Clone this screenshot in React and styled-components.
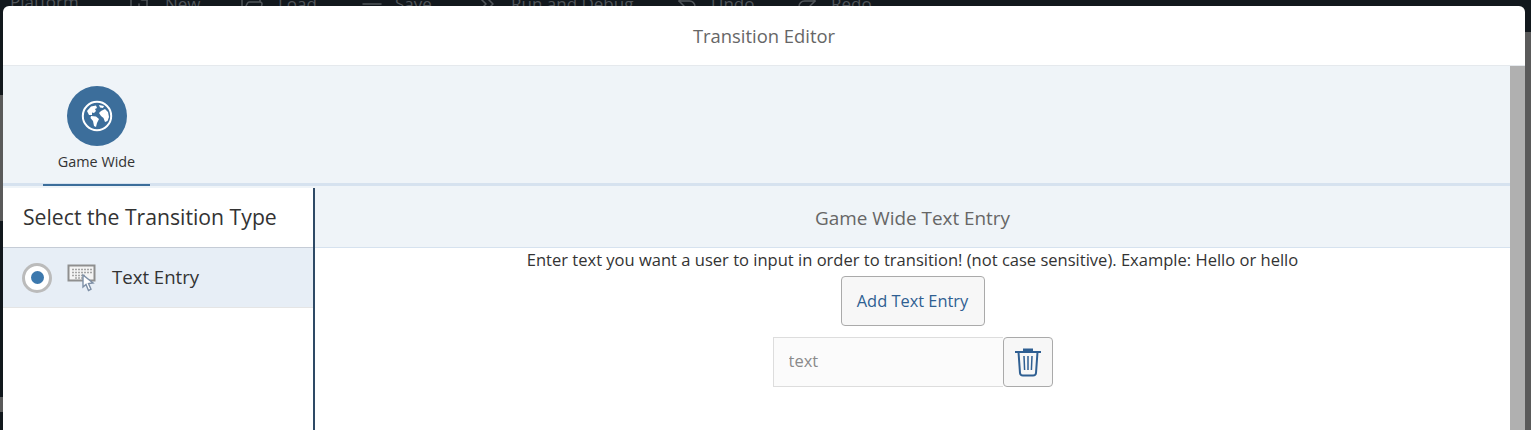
import React from 'react'
import styled, { createGlobalStyle } from 'styled-components'
import { FilePlus, FolderOpen, AlignJustify, ChevronsRight, Undo2, Redo2 } from 'lucide-react'

const GlobalStyle = createGlobalStyle`
  html, body {
    margin: 0;
    padding: 0;
    background: #12181d;
  }
  * {
    box-sizing: border-box;
  }
`

const Page = styled.div`
  position: relative;
  width: 1531px;
  height: 430px;
  overflow: hidden;
  background: #12181d;
  font-family: 'Open Sans', 'Liberation Sans', sans-serif;
`

const Toolbar = styled.div`
  display: grid;
  grid-template-columns: 127px 113px 120px 115px 200px 120px 1fr;
  height: 20px;
  margin-top: -8px;
  color: #50555a;
  font-size: 17px;
  line-height: 20px;
  white-space: nowrap;
`

const ToolItem = styled.span`
  display: flex;
  align-items: center;
  gap: ${props => props.gap}px;
`

const Strip = styled.div`
  position: absolute;
  top: ${props => props.top}px;
  height: ${props => props.h}px;
  width: ${props => props.w}px;
  left: ${props => props.left}px;
  background: ${props => props.color};
`

const Modal = styled.div`
  position: absolute;
  left: 3px;
  top: 6px;
  width: 1522px;
  height: 424px;
  display: flex;
  flex-direction: column;
  background: #fff;
  border-radius: 6px 6px 0 0;
  overflow: hidden;
`

const ModalHeader = styled.header`
  height: 60px;
  flex: none;
  display: flex;
  align-items: center;
  justify-content: center;
  border-bottom: 1px solid #e5e9ed;
  color: #666;
  font-size: 18.4px;
`

const ModalBody = styled.div`
  flex: 1;
  display: flex;
  min-height: 0;
`

const Content = styled.div`
  flex: 1;
  display: flex;
  flex-direction: column;
`

const Scrollbar = styled.div`
  width: 15px;
  flex: none;
  background: #b0b0b0;
`

const TabBar = styled.nav`
  height: 122px;
  flex: none;
  padding-bottom: 2px;
  background: #eff4f8;
`

const TabStrip = styled.div`
  height: 120px;
  display: flex;
  padding-left: 40px;
  border-bottom: 3px solid #d6e2ef;
`

const Tab = styled.div`
  width: 107px;
  height: 120px;
  display: flex;
  flex-direction: column;
  align-items: center;
  padding-top: 20px;
  border-bottom: 2px solid #3c6e9b;
  color: #333;
  font-size: 14.4px;
`

const TabCircle = styled.div`
  width: 60px;
  height: 60px;
  flex: none;
  border-radius: 50%;
  display: flex;
  align-items: center;
  justify-content: center;
  background: #3c6e9b;
  margin-bottom: 6px;
`

const Split = styled.div`
  flex: 1;
  display: flex;
  min-height: 0;
`

const Sidebar = styled.aside`
  width: 312px;
  flex: none;
  border-right: 2px solid #2e4a66;
`

const SidebarTitle = styled.h2`
  height: 60px;
  margin: 0;
  padding: 0 0 2px 20px;
  display: flex;
  align-items: center;
  border-bottom: 1px solid #c5ccd6;
  color: #333;
  font-size: 21.2px;
  font-weight: 400;
`

const TypeRow = styled.div`
  height: 60px;
  display: flex;
  align-items: center;
  padding-left: 19px;
  background: #e7eef6;
  border-bottom: 1px solid #e5e5e5;
  color: #333;
  font-size: 18.6px;
`

const Radio = styled.span`
  width: 30px;
  height: 30px;
  flex: none;
  border-radius: 50%;
  border: 3px solid #bbb;
  background: #fff;
  display: flex;
  align-items: center;
  justify-content: center;
  margin-right: 15px;

  &::after {
    content: '';
    width: 13px;
    height: 13px;
    border-radius: 50%;
    background: #3c78ad;
  }
`

const TypeLabel = styled.span`
  margin-left: 15px;
  padding-bottom: 2px;
`

const Main = styled.main`
  flex: 1;
  display: flex;
  flex-direction: column;
  align-items: center;
`

const MainHeader = styled.div`
  width: 100%;
  height: 60px;
  flex: none;
  display: flex;
  align-items: center;
  justify-content: center;
  background: #eff4f8;
  border-bottom: 1px solid #d6e2ef;
  color: #666;
  font-size: 18.9px;
`

const Hint = styled.p`
  margin: 0;
  height: 28px;
  line-height: 24px;
  color: #333;
  font-size: 16.55px;
  white-space: nowrap;
`

const Button = styled.button`
  width: ${props => props.w}px;
  height: 50px;
  padding: 0 0 ${props => (props.icon ? 0 : 2)}px;
  display: flex;
  align-items: center;
  justify-content: center;
  background: #f7f7f7;
  border: 1px solid #aaa;
  border-radius: 4px;
  color: #2f5f92;
  font-family: inherit;
  font-size: 16.4px;
`

const EntryRow = styled.div`
  display: flex;
  margin-top: 11px;
`

const TextInput = styled.input`
  width: 230px;
  height: 50px;
  padding: 0 15px 3px;
  background: #fbfbfb;
  border: 1px solid #ddd;
  border-right: none;
  font-family: inherit;
  font-size: 16.5px;
  outline: none;

  &::placeholder {
    color: #8a8a8a;
    opacity: 1;
  }
`

const PlatformLabel = styled.span`
  padding-left: 10px;
`

const GlobeIcon = () => (
  <svg width="32" height="32" viewBox="0 0 32 32">
    <circle cx="16" cy="16" r="14.2" fill="none" stroke="#fff" strokeWidth="2" />
    <path
      fill="#fff"
      d="M6 11 L10 6.5 L15 5.5 L16 8 L14 9 L15 11 L13 13 L11 12.5 L11 15 L8 15 Z M10 16 L15 16.5 L18 19 L16 23 L15 27 L13 26 L12 21 L9.5 18 Z M18 5 L23 6 L22 8 L19 7.5 Z M20 11 L24 9 L27 12 L28 17 L26.5 21 L24 22 L22.5 18 L20 16 L18 13 Z"
    />
  </svg>
)

const KeyboardIcon = () => (
  <svg width="30" height="28" viewBox="0 0 30 28">
    <rect x="1.5" y="1.5" width="26" height="15" fill="#f4f4f4" stroke="#8f8f8f" strokeWidth="2" />
    <path
      stroke="#a5a5a5"
      strokeWidth="1.6"
      strokeDasharray="2 1"
      fill="none"
      d="M5 5.5 H25 M5 8.5 H25 M5 11.5 H18 M8 14 H18"
    />
    <path
      fill="#fff"
      stroke="#7d8fa6"
      strokeWidth="1.4"
      d="M16 11 L16 23 L19 20.5 L21.5 26.5 L24 25.2 L21.5 19.5 L26 19 Z"
    />
  </svg>
)

const TrashIcon = () => (
  <svg width="26" height="30" viewBox="0 0 26 30" fill="none" stroke="#2f5f92">
    <path strokeWidth="2" d="M0 5 H26" />
    <path strokeWidth="3" d="M8 3 H18" />
    <path strokeWidth="2" d="M3.5 5 L5 26 Q5.2 28.5 8 28.5 H18 Q20.8 28.5 21 26 L22.5 5" />
    <path strokeWidth="1.5" d="M9 9 L9.6 23 M13 9 V23 M17 9 L16.4 23" />
  </svg>
)

const tools = [
  ['New', FilePlus, 14],
  ['Load', FolderOpen, 14],
  ['Save', AlignJustify, 11],
  ['Run and Debug', ChevronsRight, 12],
  ['Undo', Undo2, 12],
  ['Redo', Redo2, 12],
]

const App = () => (
  <Page>
    <GlobalStyle />
    <Toolbar>
      <PlatformLabel>Platform</PlatformLabel>
      {tools.map(([name, Icon, gap]) => (
        <ToolItem key={name} gap={gap}>
          <Icon size={24} strokeWidth={1.5} />
          {name}
        </ToolItem>
      ))}
    </Toolbar>
    <Strip left={0} top={95} w={3} h={126} color="#5a5a5a" />
    <Strip left={0} top={397} w={3} h={15} color="#5a5a5a" />
    <Strip left={1525} top={32} w={6} h={398} color="#5a5a5a" />
    <Modal>
      <ModalHeader>Transition Editor</ModalHeader>
      <ModalBody>
        <Content>
          <TabBar>
            <TabStrip>
              <Tab>
                <TabCircle>
                  <GlobeIcon />
                </TabCircle>
                Game Wide
              </Tab>
            </TabStrip>
          </TabBar>
          <Split>
            <Sidebar>
              <SidebarTitle>Select the Transition Type</SidebarTitle>
              <TypeRow>
                <Radio />
                <KeyboardIcon />
                <TypeLabel>Text Entry</TypeLabel>
              </TypeRow>
            </Sidebar>
            <Main>
              <MainHeader>Game Wide Text Entry</MainHeader>
              <Hint>
                Enter text you want a user to input in order to transition! (not case
                sensitive). Example: Hello or hello
              </Hint>
              <Button w={144}>Add Text Entry</Button>
              <EntryRow>
                <TextInput placeholder="text" />
                <Button w={50} icon>
                  <TrashIcon />
                </Button>
              </EntryRow>
            </Main>
          </Split>
        </Content>
        <Scrollbar />
      </ModalBody>
    </Modal>
  </Page>
)

export default App
